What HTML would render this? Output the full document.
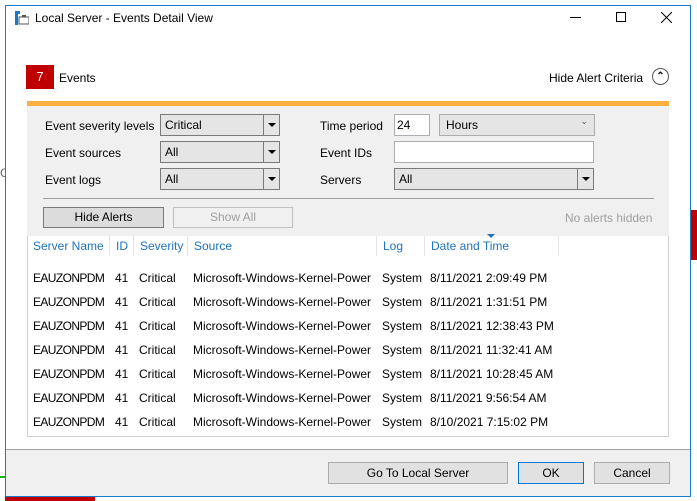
<!DOCTYPE html>
<html><head><style>
*{box-sizing:border-box;margin:0;padding:0}
body{width:697px;height:501px;overflow:hidden;background:#fff;font-family:"Liberation Sans",sans-serif;font-size:12px;color:#000;position:relative}
.a{position:absolute}
.combo{position:absolute;height:22px;border:1px solid #7a7a7a;background:#e5e5e5;padding:3px 4px;font-size:12px}
.combo .ar{position:absolute;right:0;top:0;width:16px;height:20px;border-left:1px solid #7a7a7a}
.combo .ar:after{content:"";position:absolute;left:4px;top:8px;border-left:4px solid transparent;border-right:4px solid transparent;border-top:4px solid #000}
.btn{position:absolute;height:22px;border:1px solid #adadad;background:#e1e1e1;text-align:center;line-height:20px;font-size:12px}
.hd{position:absolute;top:239px;color:#1e73be;font-size:12px}
.sep{position:absolute;top:236px;width:1px;height:20px;background:#e5e5e5}
.row{position:absolute;left:33px;font-size:12px;height:16px}
.row span{position:absolute;white-space:nowrap}
.row span:first-child{letter-spacing:-0.6px}
</style></head><body>
<div class="a" style="left:0;top:166px;width:5px;height:14px;color:#666;font-size:12px">G</div>
<div class="a" style="left:0;top:476px;width:5px;height:2px;background:#1ab21a"></div>
<div class="a" style="left:5px;top:489px;width:90px;height:12px;background:#c00000"></div>
<div class="a" style="left:690px;top:210px;width:7px;height:50px;background:#c00000"></div>
<div class="a" style="left:5px;top:5px;width:686px;height:492px;border:1px solid #1979ca;background:#fff"></div>
<svg class="a" style="left:15px;top:11px" width="14" height="14"><rect x="0" y="0" width="5" height="3" fill="#1979ca"/><rect x="0" y="3" width="3" height="11" fill="#1979ca"/><rect x="4" y="6" width="10" height="7" fill="none" stroke="#555"/><rect x="7" y="4" width="4" height="2" fill="#555"/></svg>
<div class="a" style="left:35px;top:11px;font-size:12px">Local Server - Events Detail View</div>
<div class="a" style="left:570px;top:17px;width:11px;height:1px;background:#000"></div>
<div class="a" style="left:616px;top:12px;width:10px;height:10px;border:1px solid #000"></div>
<svg class="a" style="left:661px;top:12px" width="11" height="11"><path d="M0 0L11 11M11 0L0 11" stroke="#000" stroke-width="1"/></svg>
<div class="a" style="left:26px;top:65px;width:28px;height:24px;background:#c00000;color:#fff;text-align:center;line-height:24px;font-size:13px">7</div>
<div class="a" style="left:59px;top:71px">Events</div>
<div class="a" style="left:549px;top:71px">Hide Alert Criteria</div>
<div class="a" style="left:652px;top:68px;width:17px;height:17px;border:1px solid #555;border-radius:50%;text-align:center;font-size:10px;line-height:15px;font-weight:bold">⌃</div>
<div class="a" style="left:27px;top:101px;width:642px;height:136px;background:#f0f0f0;border-top:5px solid #fdb040"></div>
<div class="a" style="left:45px;top:119px">Event severity levels</div>
<div class="a" style="left:45px;top:146px">Event sources</div>
<div class="a" style="left:45px;top:173px">Event logs</div>
<div class="combo" style="left:160px;top:114px;width:120px">Critical<div class="ar"></div></div>
<div class="combo" style="left:160px;top:141px;width:120px">All<div class="ar"></div></div>
<div class="combo" style="left:160px;top:168px;width:120px">All<div class="ar"></div></div>
<div class="a" style="left:320px;top:119px">Time period</div>
<div class="a" style="left:320px;top:146px">Event IDs</div>
<div class="a" style="left:320px;top:173px">Servers</div>
<div class="a" style="left:394px;top:114px;width:36px;height:22px;border:1px solid #abadb3;background:#fff;padding:3px 2px">24</div>
<div class="a" style="left:439px;top:114px;width:156px;height:22px;border:1px solid #adadad;background:#e5e5e5;padding:3px 6px">Hours<span style="position:absolute;right:6px;top:1px;font-size:9px;color:#555">⌄</span></div>
<div class="a" style="left:394px;top:141px;width:200px;height:22px;border:1px solid #abadb3;background:#fff"></div>
<div class="combo" style="left:394px;top:168px;width:200px">All<div class="ar"></div></div>
<div class="a" style="left:43px;top:198px;width:611px;height:1px;background:#a0a0a0"></div>
<div class="btn" style="left:43px;top:207px;width:121px;height:21px;border-color:#7a7a7a;background:#dcdcdc;line-height:19px">Hide Alerts</div>
<div class="btn" style="left:173px;top:207px;width:120px;height:21px;border-color:#bfbfbf;background:#f0f0f0;color:#a0a0a0;line-height:19px">Show All</div>
<div class="a" style="left:565px;top:211px;color:#a0a0a0">No alerts hidden</div>
<div class="a" style="left:27px;top:236px;width:642px;height:201px;border:1px solid #cfcfcf;border-top:none;background:#fff"></div>
<div class="sep" style="left:109px"></div><div class="sep" style="left:133px"></div><div class="sep" style="left:187px"></div><div class="sep" style="left:376px"></div><div class="sep" style="left:424px"></div><div class="sep" style="left:558px"></div>
<div class="hd" style="left:33px">Server Name</div><div class="hd" style="left:116px">ID</div><div class="hd" style="left:140px">Severity</div><div class="hd" style="left:194px">Source</div><div class="hd" style="left:383px">Log</div><div class="hd" style="left:431px">Date and Time</div>
<div class="a" style="left:487px;top:234px;border-left:4px solid transparent;border-right:4px solid transparent;border-top:4px solid #1e73be"></div>
<div class="row" style="top:271px"><span style="left:0">EAUZONPDM</span><span style="left:82px">41</span><span style="left:106px">Critical</span><span style="left:160px">Microsoft-Windows-Kernel-Power</span><span style="left:349px">System</span><span style="left:397px">8/11/2021 2:09:49 PM</span></div>
<div class="row" style="top:295px"><span style="left:0">EAUZONPDM</span><span style="left:82px">41</span><span style="left:106px">Critical</span><span style="left:160px">Microsoft-Windows-Kernel-Power</span><span style="left:349px">System</span><span style="left:397px">8/11/2021 1:31:51 PM</span></div>
<div class="row" style="top:319px"><span style="left:0">EAUZONPDM</span><span style="left:82px">41</span><span style="left:106px">Critical</span><span style="left:160px">Microsoft-Windows-Kernel-Power</span><span style="left:349px">System</span><span style="left:397px">8/11/2021 12:38:43 PM</span></div>
<div class="row" style="top:343px"><span style="left:0">EAUZONPDM</span><span style="left:82px">41</span><span style="left:106px">Critical</span><span style="left:160px">Microsoft-Windows-Kernel-Power</span><span style="left:349px">System</span><span style="left:397px">8/11/2021 11:32:41 AM</span></div>
<div class="row" style="top:367px"><span style="left:0">EAUZONPDM</span><span style="left:82px">41</span><span style="left:106px">Critical</span><span style="left:160px">Microsoft-Windows-Kernel-Power</span><span style="left:349px">System</span><span style="left:397px">8/11/2021 10:28:45 AM</span></div>
<div class="row" style="top:391px"><span style="left:0">EAUZONPDM</span><span style="left:82px">41</span><span style="left:106px">Critical</span><span style="left:160px">Microsoft-Windows-Kernel-Power</span><span style="left:349px">System</span><span style="left:397px">8/11/2021 9:56:54 AM</span></div>
<div class="row" style="top:415px"><span style="left:0">EAUZONPDM</span><span style="left:82px">41</span><span style="left:106px">Critical</span><span style="left:160px">Microsoft-Windows-Kernel-Power</span><span style="left:349px">System</span><span style="left:397px">8/10/2021 7:15:02 PM</span></div>
<div class="a" style="left:6px;top:449px;width:684px;height:47px;background:#f0f0f0;border-top:1px solid #a0a0a0"></div>
<div class="btn" style="left:328px;top:462px;width:180px">Go To Local Server</div>
<div class="btn" style="left:518px;top:462px;width:66px;border-color:#0078d7">OK</div>
<div class="btn" style="left:594px;top:462px;width:76px">Cancel</div>
</body></html>
